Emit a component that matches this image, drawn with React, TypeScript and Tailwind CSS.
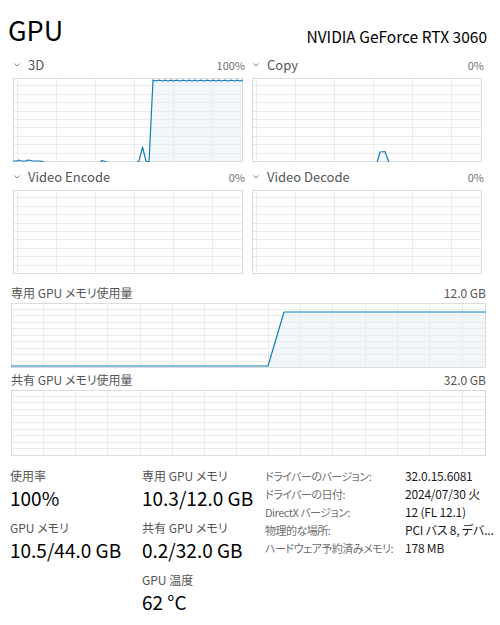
import React from "react";

type Pt = [number, number];

const LINE = "#117dbb";
const FILL = "#f1f6fa";

function Chart({
  w,
  h,
  cols,
  rows,
  line,
  fill,
}: {
  w: number;
  h: number;
  cols: number[];
  rows: number;
  line?: Pt[];
  fill?: Pt[];
}) {
  const hs = Array.from({ length: rows - 1 }, (_, i) => Math.round(((i + 1) * h) / rows) - 0.5);
  return (
    <svg width={w} height={h} className="block" shapeRendering="crispEdges">
      {fill && <polygon points={fill.map((p) => p.join(",")).join(" ")} fill={FILL} />}
      {cols.map((x) => (
        <line key={"v" + x} x1={x + 0.5} y1={0} x2={x + 0.5} y2={h} stroke="#ebebeb" />
      ))}
      {hs.map((y) => (
        <line key={"h" + y} x1={0} y1={y} x2={w} y2={y} stroke="#ebebeb" />
      ))}
      <rect x={0.5} y={0.5} width={w - 1} height={h - 1} fill="none" stroke="#dcdcdc" />
      {line && (
        <polyline
          points={line.map((p) => p.join(",")).join(" ")}
          fill="none"
          stroke={LINE}
          strokeWidth={1.2}
          shapeRendering="auto"
          strokeLinejoin="round"
        />
      )}
    </svg>
  );
}

const Chevron = () => (
  <svg width="6" height="4" viewBox="0 0 6 4" className="mr-[8px]">
    <path d="M0.5 0.5 L3 3 L5.5 0.5" fill="none" stroke="#777" strokeWidth="0.9" />
  </svg>
);

const smallCols = [4, 43, 82, 121, 160, 199];
const memCols = [32, 64, 96, 129, 161, 193, 225, 257, 289, 321, 354, 386, 418, 451];

const wave: Pt[] = Array.from({ length: 31 }, (_, i) => {
  const x = 140 + i * 3;
  return [Math.min(x, 230), i % 2 === 0 ? 2.2 : 3] as Pt;
});

const line3d: Pt[] = [
  [0, 83], [4, 83], [6, 82], [8, 83], [13, 83], [15, 82], [18, 82.5], [20, 83],
  [28, 83], [32, 84.5], [87, 84.5], [89, 82.5], [92, 83.5], [94, 84.5], [124, 84.5],
  [126, 83], [129.5, 69], [133, 83], [136, 84], [140, 2], ...wave,
];
const fill3d: Pt[] = [[136, 84], [140, 2], ...wave, [230, 84]];

const lineCopy: Pt[] = [[0, 84.5], [125, 84.5], [128, 74], [133, 73.5], [137, 84.5], [230, 84.5]];
const fillCopy: Pt[] = [[125, 84], [128, 74], [133, 73.5], [137, 84]];

const lineDed: Pt[] = [[0, 63], [257, 63], [273, 9], [475, 9]];
const fillDed: Pt[] = [[0, 63], [257, 63], [273, 9], [475, 9], [475, 65], [0, 65]];

function SmallHead({ name, value }: { name: string; value: string }) {
  return (
    <div className="flex h-[18px] items-center justify-between">
      <div className="flex items-center pl-[1px] text-[13px] text-[#555]">
        <Chevron />
        {name}
      </div>
      <span className="mr-[-2px] text-[11px] text-[#707070]">{value}</span>
    </div>
  );
}

function Stat({ label, value }: { label: string; value: string }) {
  return (
    <div className="mb-[8px]">
      <div className="h-[18px] text-[12px] leading-[18px] text-[#555]">{label}</div>
      <div className="h-[26px] text-[19px] leading-[26px] text-black">{value}</div>
    </div>
  );
}

const info: [string, string][] = [
  ["ドライバーのバージョン:", "32.0.15.6081"],
  ["ドライバーの日付:", "2024/07/30 火"],
  ["DirectX バージョン:", "12 (FL 12.1)"],
  ["物理的な場所:", "PCI バス 8, デバ..."],
  ["ハードウェア予約済みメモリ:", "178 MB"],
];

export default function App() {
  return (
    <div className="h-[625px] w-[500px] overflow-hidden bg-white pl-[11px] pr-[14px] pt-[14px] font-['Noto_Sans_CJK_JP','Noto_Sans',sans-serif] [font-feature-settings:'palt']">
      <div className="ml-[-3px] mr-[-1px] flex items-end justify-between">
        <span className="text-[27px] leading-[32px] text-black">GPU</span>
        <span className="mb-[-1px] text-[15.5px] leading-[22px] text-black">NVIDIA GeForce RTX 3060</span>
      </div>

      <div className="mt-[10px] grid grid-cols-[230px_230px] gap-x-[9px] pl-[2px]">
        <div>
          <SmallHead name="3D" value="100%" />
          <div className="mt-[4px]">
            <Chart w={230} h={84} cols={smallCols} rows={10} line={line3d} fill={fill3d} />
          </div>
        </div>
        <div>
          <SmallHead name="Copy" value="0%" />
          <div className="mt-[4px]">
            <Chart w={230} h={84} cols={smallCols} rows={10} line={lineCopy} fill={fillCopy} />
          </div>
        </div>
        <div className="mt-[6px]">
          <SmallHead name="Video Encode" value="0%" />
          <div className="mt-[4px]">
            <Chart w={230} h={84} cols={smallCols} rows={10} />
          </div>
        </div>
        <div className="mt-[6px]">
          <SmallHead name="Video Decode" value="0%" />
          <div className="mt-[4px]">
            <Chart w={230} h={84} cols={smallCols} rows={10} />
          </div>
        </div>
      </div>

      <div className="mt-[10px] flex h-[18px] items-center justify-between text-[12px] text-[#555]">
        <span>専用 GPU メモリ使用量</span>
        <span>12.0 GB</span>
      </div>
      <div className="mt-[1px]">
        <Chart w={475} h={65} cols={memCols} rows={10} line={lineDed} fill={fillDed} />
      </div>

      <div className="mt-[3px] flex h-[18px] items-center justify-between text-[12px] text-[#555]">
        <span>共有 GPU メモリ使用量</span>
        <span>32.0 GB</span>
      </div>
      <div className="mt-[1px]">
        <Chart w={475} h={66} cols={memCols} rows={10} />
      </div>

      <div className="mt-[11px] flex">
        <div className="ml-[-1px] w-[132px] shrink-0">
          <Stat label="使用率" value="100%" />
          <Stat label="GPU メモリ" value="10.5/44.0 GB" />
        </div>
        <div className="w-[123px] shrink-0">
          <Stat label="専用 GPU メモリ" value="10.3/12.0 GB" />
          <Stat label="共有 GPU メモリ" value="0.2/32.0 GB" />
          <Stat label="GPU 温度" value="62 °C" />
        </div>
        <div className="flex flex-col leading-[18px]">
          {info.map(([k, v]) => (
            <div key={k} className="flex items-baseline whitespace-nowrap">
              <span className="w-[140px] shrink-0 text-[11px] tracking-[-0.5px] text-[#6e6e6e]">{k}</span>
              <span className="text-[12px] tracking-[-0.2px] text-[#1a1a1a]">{v}</span>
            </div>
          ))}
        </div>
      </div>
    </div>
  );
}
